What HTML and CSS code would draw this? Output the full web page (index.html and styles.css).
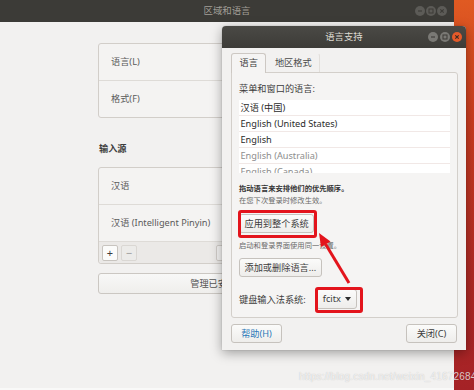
FILE: index.html
```html
<!DOCTYPE html>
<html lang="zh-CN">
<head>
<meta charset="utf-8">
<title>区域和语言</title>
<link rel="stylesheet" href="styles.css">
</head>
<body>
<div class="win bgwin">
  <div class="titlebar inactive">
    <span class="title">区域和语言</span>
    <div class="controls">
      <span class="wbtn"><svg viewBox="0 0 10 10"><path d="M3 5h4" /></svg></span>
      <span class="wbtn"><svg viewBox="0 0 10 10"><rect x="3" y="3" width="4" height="4" /></svg></span>
      <span class="wbtn"><svg viewBox="0 0 10 10"><path d="M3.3 3.3l3.4 3.4M6.7 3.3l-3.4 3.4" /></svg></span>
    </div>
  </div>
  <div class="bg-body">
    <div class="frame">
      <div class="row">语言(L)</div>
      <div class="row">格式(F)</div>
    </div>
    <div class="section">输入源</div>
    <div class="frame">
      <div class="row">汉语</div>
      <div class="row">汉语 (Intelligent Pinyin)</div>
      <div class="toolbar">
        <span class="tbtn">+</span>
        <span class="tbtn off">−</span>
        <span class="tgroup"></span>
      </div>
    </div>
    <div class="wide-btn">管理已安装的语言</div>
  </div>
</div>

<div class="win dialog">
  <div class="titlebar active">
    <span class="title">语言支持</span>
    <div class="controls">
      <span class="wbtn"><svg viewBox="0 0 10 10"><path d="M3 5h4" /></svg></span>
      <span class="wbtn"><svg viewBox="0 0 10 10"><rect x="3" y="3" width="4" height="4" /></svg></span>
      <span class="wbtn close"><svg viewBox="0 0 10 10"><path d="M3.3 3.3l3.4 3.4M6.7 3.3l-3.4 3.4" /></svg></span>
    </div>
  </div>
  <div class="dlg-body">
    <div class="tabs">
      <div class="tab active">语言</div>
      <div class="tab">地区格式</div>
    </div>
    <div class="notebook">
      <div class="lbl">菜单和窗口的语言:</div>
      <div class="langlist">
        <div class="li">汉语 (中国)</div>
        <div class="li">English (United States)</div>
        <div class="li">English</div>
        <div class="li dim">English (Australia)</div>
        <div class="li dim">English (Canada)</div>
      </div>
      <div class="hint first bold">拖动语言来安排他们的优先顺序。</div>
      <div class="hint">在您下次登录时修改生效。</div>
      <div class="btn apply">应用到整个系统</div>
      <div class="hint third">启动和登录界面使用同一设置。</div>
      <div class="btn add">添加或删除语言...</div>
      <div class="kbd-row">
        <span>键盘输入法系统:</span>
        <div class="btn combo">fcitx<span class="caret"></span></div>
      </div>
    </div>
    <div class="actions">
      <div class="btn act help">帮助(H)</div>
      <div class="btn act">关闭(C)</div>
    </div>
  </div>
</div>

<div class="mark box1"></div>
<div class="mark box2"></div>
<svg class="arrow" width="474" height="390" viewBox="0 0 474 390">
  <line x1="349" y1="283" x2="325.5" y2="244" />
  <polygon points="319,233 330.5,241.5 321,247" />
</svg>
<div class="watermark">https://blog.csdn.net/weixin_41672684</div>
</body>
</html>
```

FILE: styles.css
```css
* { box-sizing: border-box; margin: 0; padding: 0; }
html, body { width: 474px; height: 390px; overflow: hidden; }
body {
  position: relative;
  font-family: "Noto Sans", "Noto Sans CJK SC", sans-serif;
  font-size: 9.2px;
  color: #3c3c3c;
  background: linear-gradient(180deg, #e05a22 0%, #cc3d20 30%, #b02a25 70%, #a52226 100%);
}
.win { position: absolute; display: flex; flex-direction: column; background: #f2f1f0; }
.bgwin { left: 0; top: 0; width: 454px; height: 390px; border-bottom: 2px solid #f9f9f8; }
.dialog {
  left: 222px; top: 26px; width: 244px; height: 324px;
  border-radius: 4px 4px 0 0;
  box-shadow: 0 3px 12px rgba(0,0,0,0.35), 0 0 1px rgba(0,0,0,0.4);
}
.titlebar {
  height: 22px; flex: none;
  display: grid; grid-template-columns: 1fr auto 1fr; align-items: center;
  padding: 0 4px;
}
.titlebar.inactive { background: #3c3b37; color: #a29f98; padding: 0 7px; }
.titlebar.active { background: linear-gradient(#4a4945, #3d3c38); color: #dfdbd2; border-radius: 4px 4px 0 0; }
.title { grid-column: 2; font-size: 9.4px; line-height: 12px; }
.controls { grid-column: 3; justify-self: end; display: flex; gap: 1px; }
.active .controls { gap: 2px; }
.wbtn {
  width: 10px; height: 10px; border-radius: 50%;
  background: #5c5b57; display: flex;
}
.active .wbtn { background: #7a7975; }
.wbtn svg { width: 10px; height: 10px; fill: none; stroke: #3c3b37; stroke-width: 1.1; }
.wbtn svg rect { stroke-width: 1; }
.wbtn.close { background: #e45a2a; }
.wbtn.close svg { stroke: #3a2a22; }

.bg-body { padding: 21px 98px 0; display: flex; flex-direction: column; }
.frame { border: 1px solid #d2cec9; border-radius: 3px; background: #f4f3f2; display: flex; flex-direction: column; }
.row {
  height: 37px; line-height: 36px; padding-left: 12px;
  border-bottom: 1px solid #dedbd7; color: #5a5a5a;
}
.frame .row:nth-last-child(1) { border-bottom: none; height: 36px; }
.section { margin: 25px 0 12px 1px; font-weight: bold; line-height: 12px; color: #3c3c3c; }
.toolbar {
  height: 21px; background: #ebe9e7; display: flex; align-items: center;
  padding: 0 3px; gap: 3px; border-radius: 0 0 3px 3px;
}
.tbtn {
  width: 16px; height: 16px; border: 1px solid #c8c4bf; border-radius: 2px;
  background: #fbfbfa; display: flex; align-items: center; justify-content: center;
  font-size: 11px; line-height: 14px; color: #3c3c3c;
}
.tbtn.off { background: #ecebe9; border-color: #dad7d3; color: #9a9a9a; }
.tgroup { margin-left: auto; width: 136px; height: 16px; border: 1px solid #d0ccc7; border-radius: 2px; background: #f4f3f2; }
.wide-btn {
  margin-top: 9px; height: 21px; line-height: 19px; text-align: center;
  border: 1px solid #cbc7c2; border-radius: 3px;
  background: linear-gradient(#f8f8f7, #efeeec); color: #555;
}

.dlg-body { flex: 1; padding: 5px 8px 7px 9px; display: flex; flex-direction: column; }
.tabs { display: flex; height: 19px; position: relative; z-index: 1; }
.tab {
  padding: 0 7.5px; line-height: 18px; color: #4a4a4a;
  border: 1px solid transparent; border-bottom: none; border-radius: 3px 3px 0 0;
}
.tab.active { border-color: #cdc8c3; background: #f5f4f3; color: #3c3c3c; height: 20px; }
.tab + .tab { border-right-color: #e2dfdb; }
.notebook {
  border: 1px solid #d3cfca; border-radius: 0 3px 3px 3px; background: #f5f4f3;
  padding: 10px 7px 8px 7px; display: flex; flex-direction: column; align-items: flex-start;
}
.lbl { line-height: 12px; margin-bottom: 5px; color: #3c3c3c; }
.langlist { align-self: stretch; height: 73px; overflow: hidden; background: #fff; }
.li { height: 16px; line-height: 15px; padding-left: 1.5px; border-bottom: 1px solid #f1e8e6; color: #2b2b2b; }
.li.dim { color: #8d8d8d; }
.hint { font-size: 7.3px; line-height: 12px; color: #6a6a6a; }
.hint.first { margin-top: 9px; }
.hint.bold { font-weight: bold; color: #333; }
.hint.third { margin-top: 6px; }
.btn {
  height: 19px; line-height: 17px; padding: 0 4.5px;
  border: 1px solid #c6c2bd; border-radius: 3px;
  background: linear-gradient(#fbfbfa, #eeedeb); color: #3c3c3c; white-space: nowrap;
}
.btn.apply { margin-top: 8px; }
.btn.add { margin-top: 7px; }
.kbd-row { margin-top: 12px; display: flex; align-items: center; gap: 10px; }
.btn.combo { height: 20px; line-height: 18px; padding: 0 5px 0 6px; display: flex; align-items: center; gap: 4px; }
.caret { width: 0; height: 0; border-left: 3.5px solid transparent; border-right: 3.5px solid transparent; border-top: 4px solid #2e2e2e; }
.actions { margin-top: 6px; display: flex; justify-content: space-between; padding-right: 1px; }
.btn.act { width: 51px; text-align: center; }
.btn.help { color: #2c78b8; }

.mark { position: absolute; border: 3px solid #e3141c; border-radius: 3px; }
.box1 { left: 238px; top: 210px; width: 79px; height: 28px; }
.box2 { left: 315px; top: 287px; width: 48px; height: 26px; }
.arrow { position: absolute; left: 0; top: 0; pointer-events: none; }
.arrow line { stroke: #e3141c; stroke-width: 3; }
.arrow polygon { fill: #e3141c; }
.watermark {
  position: absolute; left: 299px; top: 371px;
  font-family: "Liberation Sans", sans-serif; font-size: 10px; line-height: 12px;
  color: rgba(255,255,255,0.75); text-shadow: 0 0 1px rgba(0,0,0,0.25);
  letter-spacing: 0.2px;
}
```
